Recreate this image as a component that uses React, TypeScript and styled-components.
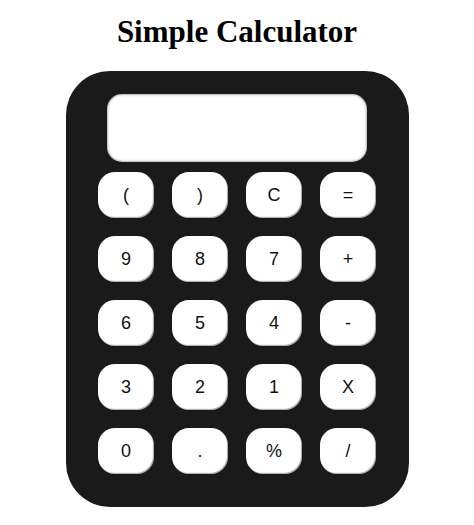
import React from "react";
import styled, { createGlobalStyle } from "styled-components";

const keys = ["(", ")", "C", "=", "9", "8", "7", "+", "6", "5", "4", "-", "3", "2", "1", "X", "0", ".", "%", "/"];

function App() {
  return (
    <>
      <GlobalStyle />
      <Page>
        <Title>Simple Calculator</Title>
        <Body>
          <Screen />
          <Keypad>
            {keys.map((k) => (
              <Key key={k}>{k}</Key>
            ))}
          </Keypad>
        </Body>
      </Page>
    </>
  );
}

const GlobalStyle = createGlobalStyle`
  html, body {
    margin: 0;
    background: #ffffff;
  }
`;

const Page = styled.div`
  display: flex;
  flex-direction: column;
  align-items: center;
  width: 474px;
`;

const Title = styled.h1`
  font-family: "Liberation Serif", "Times New Roman", serif;
  font-weight: bold;
  font-size: 31px;
  color: #000;
  margin: 14px 0 21px;
  line-height: 36px;
`;

const Body = styled.div`
  width: 343px;
  box-sizing: border-box;
  background: #1a1a1a;
  border-radius: 44px;
  padding: 23px 33px 33px;
  display: flex;
  flex-direction: column;
  align-items: center;
`;

const Screen = styled.div`
  width: 260px;
  height: 68px;
  background: #ffffff;
  border-radius: 15px;
  box-shadow: inset 0 0 3px rgba(0, 0, 0, 0.6);
  margin-bottom: 10px;
`;

const Keypad = styled.div`
  display: grid;
  grid-template-columns: repeat(4, 56px);
  grid-auto-rows: 46px;
  column-gap: 18px;
  row-gap: 18px;
`;

const Key = styled.div`
  background: #ffffff;
  border-radius: 17px;
  display: flex;
  align-items: center;
  justify-content: center;
  font-family: "Liberation Sans", Arial, sans-serif;
  font-size: 18px;
  color: #111;
  box-shadow: inset -1px -1px 1px rgba(0, 0, 0, 0.35);
`;

export default App;
